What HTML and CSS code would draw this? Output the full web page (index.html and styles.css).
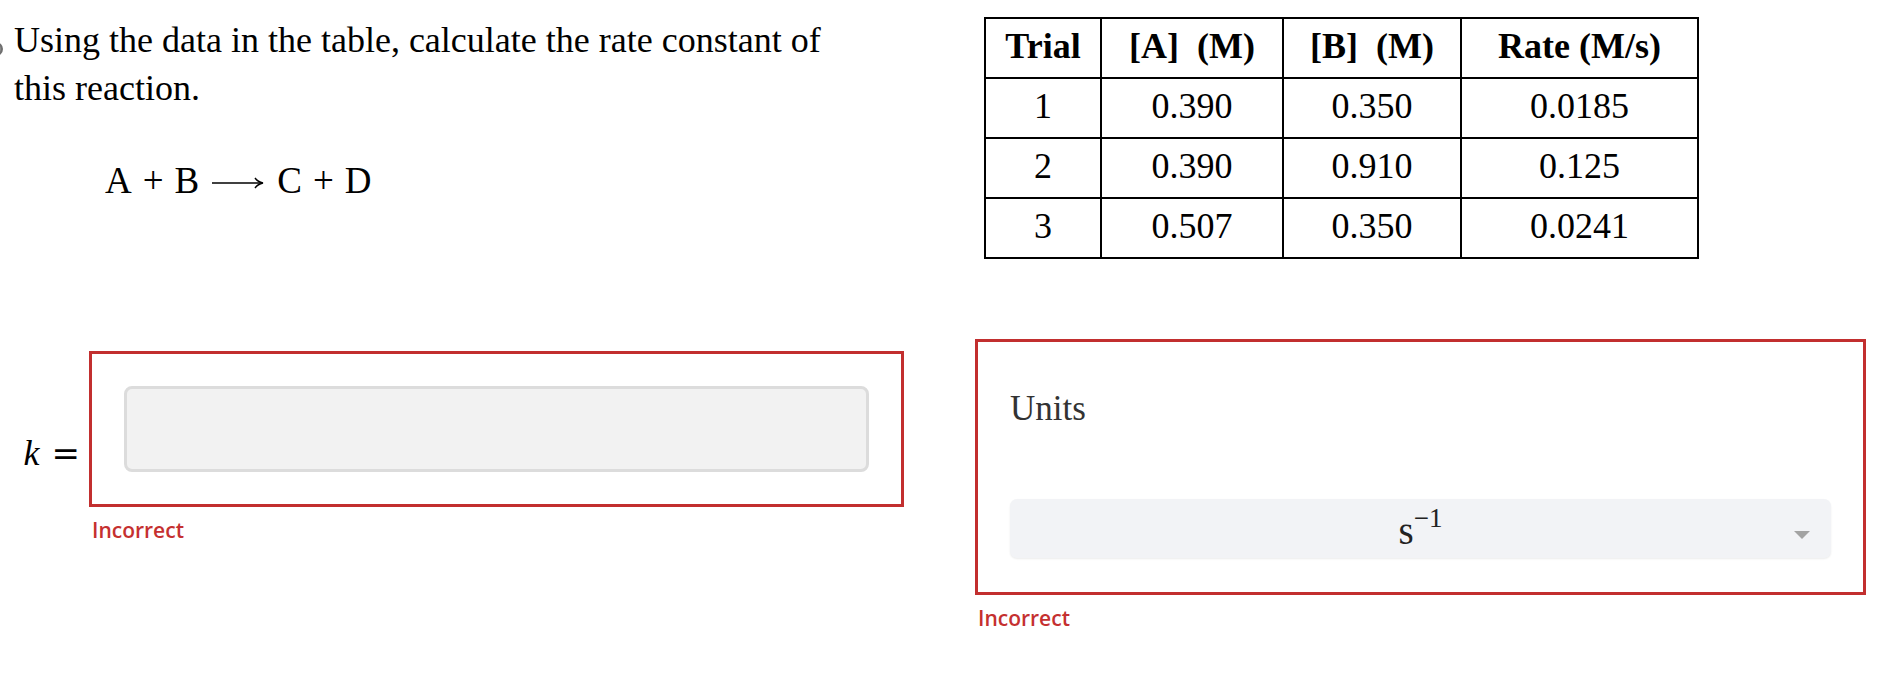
FILE: index.html
```html
<!DOCTYPE html>
<html lang="en">
<head>
    <meta charset="UTF-8">
    <title>Rate Constant</title>
    <link rel="stylesheet" href="styles.css">
</head>
<body>
    <div class="page">
        <div class="question-col">
            <div class="prompt">
                <span class="q-dot"></span>
                <p class="prompt-text">Using the data in the table, calculate the rate constant of this reaction.</p>
            </div>

            <div class="equation">
                <span>A</span><span class="op">+</span><span>B</span>
                <svg class="arrow" width="52" height="14" viewBox="0 0 52 14">
                    <path d="M0 7 H50" stroke="#000" stroke-width="1.6" fill="none"/>
                    <path d="M43 2 Q46 6 51 7 Q46 8 43 12" stroke="#000" stroke-width="1.4" fill="none"/>
                </svg>
                <span>C</span><span class="op">+</span><span>D</span>
            </div>

            <div class="answer-row">
                <div class="k-label"><i>k</i><span class="eq">=</span></div>
                <div class="answer-block">
                    <div class="answer-box">
                        <div class="text-input"></div>
                    </div>
                    <div class="feedback">Incorrect</div>
                </div>
            </div>
        </div>

        <div class="data-col">
            <table class="rate-table">
                <colgroup>
                    <col style="width: 116px">
                    <col style="width: 182px">
                    <col style="width: 178px">
                    <col style="width: 237px">
                </colgroup>
                <tr>
                    <th>Trial</th>
                    <th>[A]&nbsp; (M)</th>
                    <th>[B]&nbsp; (M)</th>
                    <th>Rate (M/s)</th>
                </tr>
                <tr><td>1</td><td>0.390</td><td>0.350</td><td>0.0185</td></tr>
                <tr><td>2</td><td>0.390</td><td>0.910</td><td>0.125</td></tr>
                <tr><td>3</td><td>0.507</td><td>0.350</td><td>0.0241</td></tr>
            </table>

            <div class="units-block">
                <div class="units-box">
                    <div class="units-label">Units</div>
                    <div class="select">
                        <span class="unit">s<sup>&minus;1</sup></span>
                    </div>
                </div>
                <div class="feedback">Incorrect</div>
            </div>
        </div>
    </div>
</body>
</html>
```

FILE: styles.css
```css
* {
    box-sizing: border-box;
    margin: 0;
    padding: 0;
}
body {
    background: #fff;
    color: #000;
    font-family: "Liberation Serif", "Times New Roman", serif;
    font-size: 36px;
    line-height: 48px;
    overflow: hidden;
}
.page {
    display: grid;
    grid-template-columns: 975px 1fr;
}

/* left side: question + answer */
.prompt {
    display: flex;
    align-items: flex-start;
    padding-top: 16px;
}
.q-dot {
    flex: none;
    width: 14px;
    height: 14px;
    margin: 26px 11px 0 -11px;
    border-radius: 50%;
    background: #8c8c8c;
    border: 2px solid #6f6f6f;
}
.prompt-text {
    width: 840px;
}
.equation {
    display: flex;
    align-items: baseline;
    margin-top: 45px;
    padding-left: 105px;
    font-size: 37px;
}
.equation .op {
    margin: 0 11px;
}
.equation .arrow {
    margin: 0 13px;
    align-self: center;
    position: relative;
    top: 2px;
}
.answer-row {
    display: flex;
    align-items: flex-start;
    margin-top: 146px;
}
.k-label {
    width: 80px;
    margin-right: 9px;
    padding-top: 78px;
    text-align: right;
}
.k-label i {
    margin-right: 12px;
}
.k-label .eq {
    font-family: "DejaVu Serif", serif;
    font-size: 34px;
}
.answer-block {
    width: 815px;
}
.answer-box {
    border: 3px solid #c22f2f;
    padding: 32px;
}
.text-input {
    height: 86px;
    background: #f2f2f2;
    border: 3px solid #dcdcdc;
    border-radius: 8px;
}
.feedback {
    margin-top: 10px;
    padding-left: 3px;
    color: #c53030;
    font-family: "Open Sans", "Liberation Sans", sans-serif;
    font-weight: 600;
    font-size: 21px;
    line-height: 27px;
}

/* right side: table + units */
.rate-table {
    margin: 17px 0 0 9px;
    width: 713px;
    border-collapse: collapse;
    table-layout: fixed;
}
.rate-table th, .rate-table td {
    border: 2px solid #000;
    text-align: center;
    padding: 3px 0 7px;
    line-height: 48px;
    font-size: 36px;
}
.rate-table th {
    font-weight: bold;
}
.units-block {
    width: 891px;
    margin-top: 80px;
}
.units-box {
    border: 3px solid #c22f2f;
    padding: 32px 32px 34px;
}
.units-label {
    margin-top: 13px;
    color: #333;
    font-size: 35px;
    line-height: 44px;
}
.select {
    position: relative;
    display: flex;
    align-items: center;
    justify-content: center;
    height: 59px;
    margin-top: 68px;
    background: #f2f3f6;
    border-radius: 7px;
    box-shadow: 0 1px 2px rgba(0, 0, 0, 0.08);
}
.select::after {
    content: "";
    position: absolute;
    right: 21px;
    top: 32px;
    border-left: 8px solid transparent;
    border-right: 8px solid transparent;
    border-top: 8px solid #a3a3a3;
}
.unit {
    font-size: 39px;
    line-height: 40px;
    color: #222;
    position: relative;
    top: 2px;
}
.unit sup {
    font-size: 27px;
    vertical-align: 17px;
    line-height: 0;
}
```
